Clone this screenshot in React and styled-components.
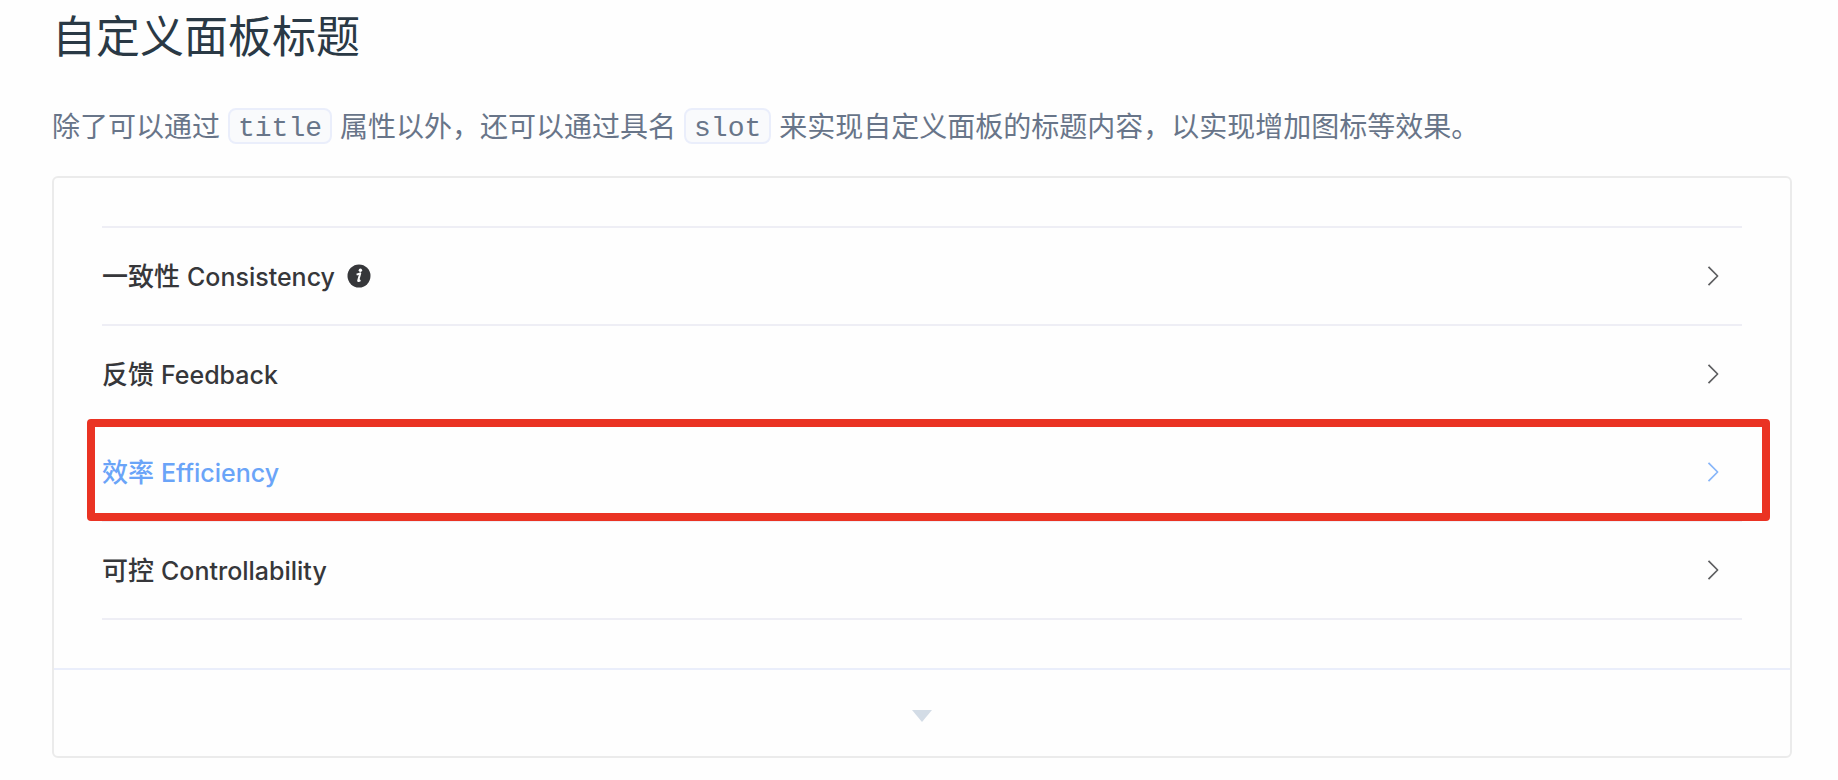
import React, { useState } from 'react';
import styled, { createGlobalStyle } from 'styled-components';

const GlobalStyle = createGlobalStyle`
  * {
    box-sizing: border-box;
  }

  body {
    margin: 0;
    background-color: #fefefe;
    font-family: 'Inter', 'Noto Sans CJK SC', sans-serif;
    -webkit-font-smoothing: antialiased;
  }

  button {
    border: 0;
    padding: 0;
    background: none;
    font-family: inherit;
    cursor: pointer;
  }
`;

const Page = styled.main`
  padding: 12px 46px 22px 52px;
`;

const Heading = styled.h3`
  margin: 0 0 45px;
  font-family: 'Noto Sans CJK SC', sans-serif;
  font-size: 44px;
  font-weight: 400;
  line-height: 44px;
  color: #2a3945;
`;

const Description = styled.p`
  margin: 0 0 27px;
  font-family: 'Noto Sans CJK SC', sans-serif;
  font-size: 28px;
  line-height: 48px;
  color: #687589;
`;

const Code = styled.code`
  display: inline-block;
  margin: 0 8px;
  padding: 6px 8px 0;
  border: 2px solid #eaeefb;
  border-radius: 8px;
  background-color: #f9fafc;
  font-family: 'Liberation Mono', monospace;
  font-size: 28px;
  line-height: 26px;
  vertical-align: 1px;
`;

const DemoBlock = styled.section`
  border: 2px solid #ebebeb;
  border-radius: 6px;
`;

const Source = styled.div`
  padding: 48px;
`;

const Collapse = styled.div`
  border-top: 2px solid #eeeef5;
`;

const CollapseItem = styled.div`
  position: relative;
  border-bottom: 2px solid #eeeef5;
`;

const CollapseHeader = styled.button`
  display: flex;
  align-items: center;
  width: 100%;
  height: 96px;
  padding-right: 16px;
  font-size: 26px;
  font-weight: 500;
  color: ${(props) => (props.$active ? '#6aa4f8' : '#36373a')};
`;

const Label = styled.span`
  padding-bottom: 4px;
`;

const Latin = styled.span`
  font-size: 25px;
`;

const Arrow = styled.svg`
  width: 26px;
  height: 26px;
  margin-left: auto;
  opacity: 0.8;
  transition: transform 0.3s;
  transform: ${(props) => (props.$open ? 'rotate(90deg)' : 'none')};
`;

const InfoIcon = styled.svg`
  width: 24px;
  height: 24px;
  margin-left: 12px;
`;

const CollapseContent = styled.div`
  padding-bottom: 48px;
  font-size: 26px;
  line-height: 46px;
  color: #303133;
`;

const Highlight = styled.div`
  position: absolute;
  inset: -5px -28px -1px -15px;
  border: 8px solid #ea3323;
  border-radius: 4px;
  pointer-events: none;
`;

const Control = styled.button`
  display: flex;
  align-items: center;
  justify-content: center;
  width: 100%;
  height: 88px;
  padding-top: 6px;
  border-top: 2px solid #eaeefb;
`;

const Caret = styled.svg`
  width: 20px;
  height: 12px;
`;

const items = [
  { name: '1', zh: '一致性', en: 'Consistency', info: true },
  { name: '2', zh: '反馈', en: 'Feedback' },
  { name: '3', zh: '效率', en: 'Efficiency', active: true },
  { name: '4', zh: '可控', en: 'Controllability' },
];

function App() {
  const [open, setOpen] = useState(null);

  return (
    <>
      <GlobalStyle />
      <Page>
        <Heading>自定义面板标题</Heading>
        <Description>
          除了可以通过<Code>title</Code>属性以外，还可以通过具名<Code>slot</Code>来实现自定义面板的标题内容，以实现增加图标等效果。
        </Description>
        <DemoBlock>
          <Source>
            <Collapse>
              {items.map((item) => (
                <CollapseItem key={item.name}>
                  <CollapseHeader
                    type="button"
                    $active={item.active}
                    aria-expanded={open === item.name}
                    onClick={() => setOpen(open === item.name ? null : item.name)}
                  >
                    <Label>
                      {item.zh} <Latin>{item.en}</Latin>
                    </Label>
                    {item.info && (
                      <InfoIcon viewBox="0 0 24 24" aria-hidden="true">
                        <circle cx="12" cy="12" r="11.5" fill="currentColor" />
                        <circle cx="13.4" cy="6.2" r="1.7" fill="#fefefe" />
                        <path
                          d="M9.6 10.6 L13.2 9.4 L11.2 16.4 Q11 17.7 13.4 16.2"
                          fill="none"
                          stroke="#fefefe"
                          strokeWidth="2"
                          strokeLinejoin="round"
                        />
                      </InfoIcon>
                    )}
                    <Arrow viewBox="0 0 26 26" $open={open === item.name} aria-hidden="true">
                      <path
                        d="M8.5 3.8 L17.6 13 L8.5 22.2"
                        fill="none"
                        stroke="currentColor"
                        strokeWidth="1.7"
                        strokeLinejoin="round"
                      />
                    </Arrow>
                  </CollapseHeader>
                  {open === item.name && (
                    <CollapseContent>
                      {item.zh} {item.en}
                    </CollapseContent>
                  )}
                  {item.active && <Highlight />}
                </CollapseItem>
              ))}
            </Collapse>
          </Source>
          <Control type="button" aria-label="显示代码">
            <Caret viewBox="0 0 20 12" aria-hidden="true">
              <path d="M0 0 H20 L10 12 Z" fill="#d3dce6" />
            </Caret>
          </Control>
        </DemoBlock>
      </Page>
    </>
  );
}

export default App;
